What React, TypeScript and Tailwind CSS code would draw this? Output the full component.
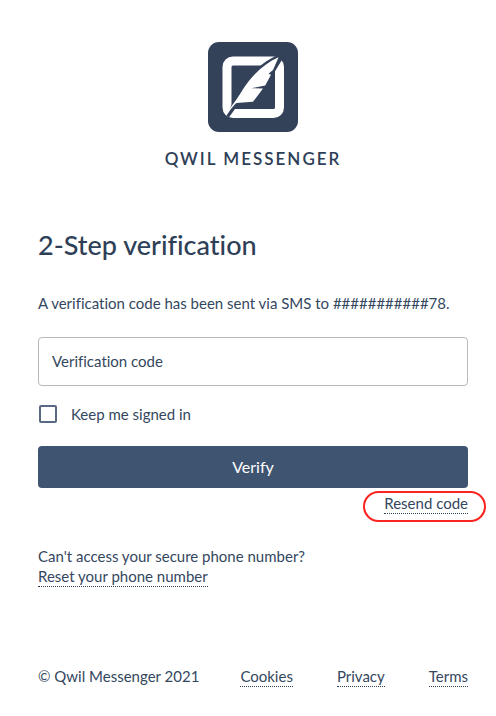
import type { ReactNode } from 'react';

function Logo() {
  return (
    <svg viewBox="0 0 90 90" className="size-[90px]" role="img" aria-label="Qwil Messenger logo">
      <rect width="90" height="90" rx="11" fill="#344259" />
      <rect x="19" y="19" width="52.5" height="52.5" rx="6" fill="none" stroke="#fff" strokeWidth="9" />
      <path d="M70 13C56 19 42 31 32.5 46C28.5 53 26 59 23.5 63L18.5 73L20.5 76L29.5 63.5L46 61.5L57 46L66 31L74.5 17L73 13Z" fill="#344259" />
      <path d="M70.5 15.2C57 21 45 32 35.5 46.5C31 54 26 61 22 66L17 69.5L18.5 73.5C23 67 26 62.5 28.5 61L45 59.8L55 46.4L43.5 46.2L57.2 43.4L63 32.8L60.5 31.8L65 28L69.8 17Z" fill="#fff" />
    </svg>
  );
}

function TextLink({ children }: { children: ReactNode }) {
  return (
    <a href="#" className="inline-block h-[21px] border-b border-dotted border-[#2e4057] leading-5">
      {children}
    </a>
  );
}

export default function App() {
  return (
    <main className="min-h-screen bg-white px-7 pt-[42px] pb-7 pl-[38px] font-['Lato',sans-serif] text-[15px] leading-5 text-[#344760] [font-variant-ligatures:none]">
      <header className="flex flex-col items-center">
        <Logo />
        <p className="mt-[17px] text-[17px] leading-5 font-semibold tracking-[2px] text-[#2e4057]">QWIL MESSENGER</p>
      </header>

      <h1 className="mt-[60px] text-[27px] leading-8 font-medium text-[#2e4057]">2-Step verification</h1>
      <p className="mt-8">A verification code has been sent via SMS to ###########78.</p>

      <form className="mt-6" onSubmit={(e) => e.preventDefault()}>
        <input
          type="text"
          aria-label="Verification code"
          placeholder="Verification code"
          className="block h-[49px] w-full rounded border border-[#b9b9b9] px-[13px] pb-0.5 placeholder:text-[#344760] placeholder:opacity-100"
        />
        <label className="mt-[18px] flex items-center gap-[14px] pl-px">
          <input type="checkbox" className="size-[18px] appearance-none rounded-xs border-2 border-[#596981] checked:bg-[#596981]" />
          Keep me signed in
        </label>
        <button type="submit" className="mt-[22px] block h-[42px] w-full rounded bg-[#3f5470] text-base text-white">
          Verify
        </button>
      </form>

      <div className="mt-[5px] flex justify-end">
        <div className="relative h-[21px]">
          <TextLink>Resend code</TextLink>
          <span className="pointer-events-none absolute -top-0.5 -right-[18px] -bottom-2 -left-[21px] rounded-full border-2 border-[#fa2420]" />
        </div>
      </div>

      <section className="mt-8 flex flex-col items-start">
        <p>Can't access your secure phone number?</p>
        <TextLink>Reset your phone number</TextLink>
      </section>

      <footer className="mt-[79px] flex items-start justify-between">
        <p>© Qwil Messenger 2021</p>
        <nav className="flex gap-11">
          <TextLink>Cookies</TextLink>
          <TextLink>Privacy</TextLink>
          <TextLink>Terms</TextLink>
        </nav>
      </footer>
    </main>
  );
}
